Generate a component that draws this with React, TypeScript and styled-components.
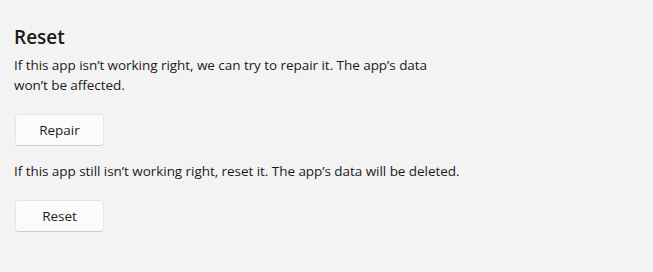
import React from "react";
import styled, {createGlobalStyle} from "styled-components";

const GlobalStyle = createGlobalStyle`
    html, body {
        margin: 0;
        padding: 0;
        background: #f3f3f3;
    }
    body {
        font-family: "Open Sans", "Noto Sans", "Liberation Sans", sans-serif;
        color: #1b1b1b;
        -webkit-font-smoothing: antialiased;
    }
`;

interface Action {
    description: string,
    label: string,
    wide?: boolean
}

const actions: Action[] = [
    {
        description: "If this app isn’t working right, we can try to repair it. The app’s data won’t be affected.",
        label: "Repair"
    },
    {
        description: "If this app still isn’t working right, reset it. The app’s data will be deleted.",
        label: "Reset",
        wide: true
    }
];

export default function App() {
    return (
        <>
            <GlobalStyle/>
            <Page>
                <Title>Reset</Title>
                {actions.map((item: Action) => (
                    <Block key={item.label}>
                        <Description wide={item.wide}>{item.description}</Description>
                        <Button type="button">{item.label}</Button>
                    </Block>
                ))}
            </Page>
        </>
    );
}

const Page = styled.div`
    width: 653px;
    height: 272px;
    box-sizing: border-box;
    padding: 24px 14px 0 14px;
`;

const Title = styled.h2`
    margin: 0 0 5px 0;
    font-size: 19px;
    line-height: 26px;
    font-weight: 600;
`;

const Block = styled.div`
    display: flex;
    flex-direction: column;
    align-items: flex-start;
    margin-bottom: 15px;
`;

const Description = styled.p<{ wide?: boolean }>`
    margin: 0 0 19px 0;
    font-size: 13.5px;
    line-height: 20px;
    letter-spacing: -0.05px;
    max-width: ${props => props.wide ? "600px" : "422px"};
`;

const Button = styled.button`
    margin-left: 1px;
    width: 89px;
    height: 32px;
    padding: 0;
    background: #fbfbfb;
    border: 1px solid #e5e5e5;
    border-bottom-color: #cccccc;
    border-radius: 4px;
    font-family: inherit;
    font-size: 13.5px;
    color: #1b1b1b;
    cursor: pointer;
`;
